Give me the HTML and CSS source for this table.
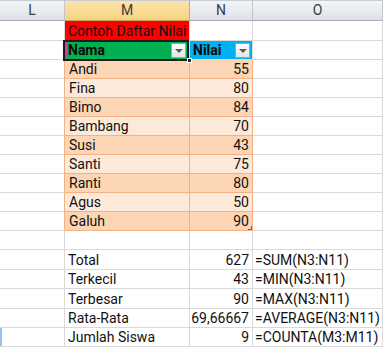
FILE: index.html
```html
<!DOCTYPE html>
<html lang="id">
<head>
<meta charset="utf-8">
<title>Contoh Daftar Nilai</title>
<link rel="stylesheet" href="styles.css">
</head>
<body>
<div class="sheet">
  <div class="row head">
    <div class="c hc">L</div>
    <div class="c hc hsel">M</div>
    <div class="c hc">N</div>
    <div class="c hc">O</div>
  </div>

  <div class="row r20">
    <div class="c"></div>
    <div class="c title">Contoh Daftar Nilai</div>
    <div class="c"></div>
    <div class="c"></div>
  </div>

  <div class="row">
    <div class="c"></div>
    <div class="c th th-nama active">Nama<span class="dd"><i></i></span></div>
    <div class="c th th-nilai">Nilai<span class="dd"><i></i></span></div>
    <div class="c"></div>
  </div>

  <div class="row"><div class="c"></div><div class="c td dark">Andi</div><div class="c td dark num">55</div><div class="c"></div></div>
  <div class="row"><div class="c"></div><div class="c td light">Fina</div><div class="c td light num">80</div><div class="c"></div></div>
  <div class="row"><div class="c"></div><div class="c td dark">Bimo</div><div class="c td dark num">84</div><div class="c"></div></div>
  <div class="row"><div class="c"></div><div class="c td light">Bambang</div><div class="c td light num">70</div><div class="c"></div></div>
  <div class="row"><div class="c"></div><div class="c td dark">Susi</div><div class="c td dark num">43</div><div class="c"></div></div>
  <div class="row"><div class="c"></div><div class="c td light">Santi</div><div class="c td light num">75</div><div class="c"></div></div>
  <div class="row"><div class="c"></div><div class="c td dark">Ranti</div><div class="c td dark num">80</div><div class="c"></div></div>
  <div class="row"><div class="c"></div><div class="c td light">Agus</div><div class="c td light num">50</div><div class="c"></div></div>
  <div class="row"><div class="c"></div><div class="c td dark">Galuh</div><div class="c td dark num last">90</div><div class="c"></div></div>

  <div class="row"><div class="c"></div><div class="c"></div><div class="c"></div><div class="c"></div></div>

  <div class="row r20"><div class="c"></div><div class="c">Total</div><div class="c num">627</div><div class="c f">=SUM(N3:N11)</div></div>
  <div class="row"><div class="c"></div><div class="c">Terkecil</div><div class="c num">43</div><div class="c f">=MIN(N3:N11)</div></div>
  <div class="row r20"><div class="c"></div><div class="c">Terbesar</div><div class="c num">90</div><div class="c f">=MAX(N3:N11)</div></div>
  <div class="row"><div class="c"></div><div class="c">Rata-Rata</div><div class="c num">69,66667</div><div class="c f">=AVERAGE(N3:N11)</div></div>
  <div class="row"><div class="c rowmark"></div><div class="c">Jumlah Siswa</div><div class="c num">9</div><div class="c f">=COUNTA(M3:M11)</div></div>
</div>
</body>
</html>
```

FILE: styles.css
```css
html, body {
  margin: 0;
  padding: 0;
  background: #fff;
  overflow: hidden;
}

.sheet {
  width: 383px;
  font-family: Roboto, "Liberation Sans", sans-serif;
  font-size: 14px;
  color: #111;
}

.row {
  display: grid;
  grid-template-columns: 65px 125px 63px 130px;
  height: 19px;
}

.row.r20 { height: 20px; }

.c {
  box-sizing: border-box;
  border-right: 1px solid #d9d9d9;
  border-bottom: 1px solid #d9d9d9;
  padding: 0 3px;
  display: flex;
  align-items: flex-end;
  line-height: 17px;
  white-space: nowrap;
  position: relative;
}

.num { justify-content: flex-end; }

/* column headers */
.head { height: 21px; }

.hc {
  justify-content: center;
  align-items: center;
  color: #3b3b3b;
  font-size: 14px;
  background: linear-gradient(#f3f5f8, #dde1e7);
  border-top: 1px solid #c9ccd1;
  border-right: 1px solid #c2c6cc;
  border-bottom: 1px solid #a9adb3;
}

.hsel {
  background: linear-gradient(#fbe4a9, #f7d383);
  border-right-color: #c8ab6a;
  border-bottom-color: #c9a357;
}

/* title cell */
.title {
  background: #ff0000;
  color: #111;
}

/* table header cells */
.th {
  font-weight: 700;
  color: #0a0a0a;
  padding-left: 3px;
}

.th-nama { background: #00b050; }
.th-nilai { background: #00b0f0; }

.dd {
  position: absolute;
  right: 2px;
  top: 2px;
  width: 13px;
  height: 13px;
  border: 1px solid #a3a3a3;
  background: linear-gradient(#ffffff, #e3e3e3);
  display: flex;
  align-items: center;
  justify-content: center;
}

.dd i {
  width: 0;
  height: 0;
  border-left: 4px solid transparent;
  border-right: 4px solid transparent;
  border-top: 4px solid #5a5a5a;
  margin-top: 1px;
}

/* active cell frame */
.active::before {
  content: "";
  position: absolute;
  left: 1px;
  right: 0;
  top: 0;
  bottom: 1px;
  border-left: 1px solid #e03c9c;
  border-bottom: 1px solid #e03c9c;
  pointer-events: none;
}

.active::after {
  content: "";
  position: absolute;
  left: -2px;
  right: 0;
  top: -1px;
  bottom: -2px;
  border: 2px solid #1c1c24;
  pointer-events: none;
}

/* fill handle at the corner of the active cell */
.active .dd::after {
  content: "";
  position: absolute;
  right: -7px;
  bottom: -6px;
  width: 3px;
  height: 3px;
  background: #1c2a44;
  border: 1px solid #fff;
}

.th-nama .dd { right: 3px; z-index: 1; }

/* body of the table */
.td {
  border-right-color: #f4b183;
  border-bottom-color: #f4b183;
}

.row > .td:nth-child(2) {
  border-left: 1px solid #f4b183;
  margin-left: -1px;
  padding-left: 4px;
}

.dark { background: #fcd5b4; }
.light { background: #fde9d9; }

.last::after {
  content: "";
  position: absolute;
  right: 0;
  bottom: 0;
  width: 3px;
  height: 3px;
  border-right: 1px solid #4466b0;
  border-bottom: 1px solid #4466b0;
}

/* formula text next to the results */
.f {
  padding-left: 2px;
  color: #111;
}

.rowmark { box-shadow: inset 2px 0 0 #9fc1e8; }

.sheet .row:nth-child(3) > .c:nth-child(2) { z-index: 2; }
```
